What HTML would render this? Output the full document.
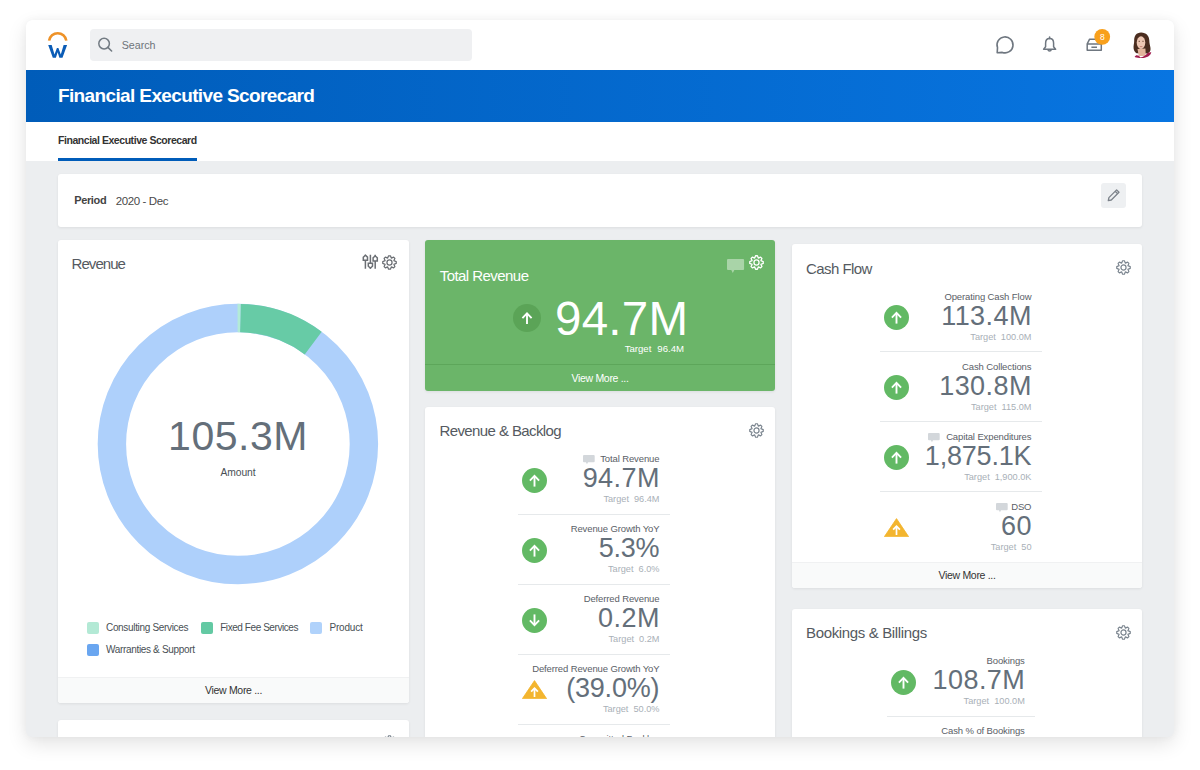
<!DOCTYPE html>
<html><head><meta charset="utf-8">
<style>
*{box-sizing:border-box;margin:0;padding:0}
html,body{width:1200px;height:770px;background:#fff;overflow:hidden;font-family:"Liberation Sans",sans-serif}
.win{position:absolute;left:26px;top:20px;width:1148px;height:717px;border-radius:6px;overflow:hidden;background:#eceef0;box-shadow:0 7px 20px rgba(0,0,0,0.11),0 0 8px rgba(0,0,0,0.04)}
.pg{position:absolute;left:-26px;top:-20px;width:1200px;height:770px}
.a{position:absolute;display:block}
.t{position:absolute;white-space:nowrap;line-height:1}
.card{position:absolute;background:#fff;border-radius:3px;box-shadow:0 1px 3px rgba(0,0,0,0.07)}
.foot{position:absolute;left:0;right:0;bottom:0;height:26px;background:#f9fafa;border-top:1px solid #f0f1f2;border-radius:0 0 3px 3px}
</style></head>
<body>
<div class="win"><div class="pg">

<div class="a" style="left:26px;top:20px;width:1148px;height:50px;background:#fff"></div>
<div class="a" style="left:26px;top:70px;width:1148px;height:52px;background:linear-gradient(90deg,#005cb9,#0875e1)"></div>
<div class="a" style="left:26px;top:122px;width:1148px;height:39px;background:#fff"></div>
<svg class="a" style="left:40px;top:28px" width="34" height="34" viewBox="40 28 34 34">
<path d="M49.1 40.6 A8.7 8.7 0 0 1 66.3 40.6" fill="none" stroke="#ee9228" stroke-width="2.6" stroke-linecap="butt"/>
<path d="M48.2 44.9 L51.7 44.9 L54.5 54.5 L56.9 47.9 L58.4 47.9 L60.8 54.5 L63.6 44.9 L67.1 44.9 L62.5 57.8 L59.4 57.8 L57.65 52.3 L55.9 57.8 L52.8 57.8 Z" fill="#0b5cb6"/>
</svg>
<div class="a" style="left:89.5px;top:29px;width:382.5px;height:32px;background:#eff0f2;border-radius:4px"></div>
<svg class="a" style="left:96px;top:35px" width="20" height="20" viewBox="96 35 20 20">
<circle cx="104.1" cy="43.6" r="5.3" fill="none" stroke="#737b83" stroke-width="1.5"/>
<path d="M107.9 47.4 L111.6 51" stroke="#737b83" stroke-width="1.6" stroke-linecap="round"/></svg>
<div class="t" style="left:121.70px;top:39.94px;font-size:10.7px;color:#6e747a;font-weight:normal;">Search</div>
<svg class="a" style="left:994px;top:34px" width="22" height="22" viewBox="994 34 22 22">
<path d="M1002.3 52.4 A8 8 0 1 0 997.5 47.6 L997.2 52.7 Z" fill="none" stroke="#6f7780" stroke-width="1.6" stroke-linejoin="round"/></svg>
<svg class="a" style="left:1040px;top:34px" width="20" height="22" viewBox="1040 34 20 22">
<path d="M1043.6 49.3 L1045.6 46.8 L1045.6 43.2 C1045.6 40.4 1047.4 38.6 1049.6 38.6 C1051.8 38.6 1053.6 40.4 1053.6 43.2 L1053.6 46.8 L1055.6 49.3 Z" fill="none" stroke="#6f7780" stroke-width="1.5" stroke-linejoin="round"/>
<path d="M1047.9 49.6 A1.75 1.75 0 0 0 1051.3 49.6" fill="none" stroke="#6f7780" stroke-width="1.5"/>
<path d="M1049.6 37 L1049.6 38.6" stroke="#6f7780" stroke-width="1.6" stroke-linecap="round"/></svg>
<svg class="a" style="left:1084px;top:26px" width="30" height="28" viewBox="1084 26 30 28">
<path d="M1087.2 43.9 L1089.6 39.2 L1098.6 39.2 L1101.3 43.9 L1101.3 50.2 L1087.2 50.2 Z M1087.2 43.9 L1101.3 43.9" fill="none" stroke="#6f7780" stroke-width="1.5" stroke-linejoin="round"/>
<path d="M1091.4 47.3 L1097 47.3" stroke="#6f7780" stroke-width="1.6"/>
<circle cx="1102.2" cy="36.8" r="7.9" fill="#f8a01c"/>
</svg>
<div class="t" style="left:802.30px;width:600px;text-align:center;top:32.80px;font-size:8.5px;color:#fff;font-weight:normal;">8</div>
<svg class="a" style="left:1130px;top:30px" width="24" height="30" viewBox="1130 30 24 30">
<path d="M1141.2 32.5 C1136.5 32.4 1134 36 1134.2 40.5 C1134.3 43.5 1133.2 45.5 1133.6 48.5 C1134 51 1135.2 52.5 1136.5 53.2 L1147.8 53.6 C1149.6 52.4 1150.9 50.8 1150.5 48 C1150.2 45.5 1149.3 43.5 1149.3 40.5 C1149.2 35.8 1146.2 32.6 1141.2 32.5 Z" fill="#4b2d1f"/>
<path d="M1137.5 49 C1138 52 1138.5 54 1138.8 56 L1145.5 56 C1145.8 53.5 1145.6 51 1145.4 48.5 Z" fill="#e2b59c"/>
<ellipse cx="1141" cy="42.6" rx="4.3" ry="6.3" fill="#edc7b3"/>
<path d="M1138.6 41.3 h1.4 M1142.3 41.3 h1.4" stroke="#6a4634" stroke-width="0.9"/>
<path d="M1139.8 46.6 h2.6" stroke="#c27a70" stroke-width="0.9"/>
<path d="M1134.6 57 C1135.6 55 1137 54.6 1138.8 55.8 L1140.5 57.6 C1144 56.8 1146.5 54.5 1147.5 53 C1149 52.5 1150.5 52.2 1151.3 52.4 C1150.5 55.5 1147 57.8 1142 58 C1139 58 1136.6 57.8 1134.6 57 Z" fill="#a11d4e"/>
</svg>
<div class="t" style="left:58.00px;top:86.42px;font-size:19px;color:#fff;font-weight:bold;letter-spacing:-0.63px;">Financial Executive Scorecard</div>
<div class="t" style="left:58.00px;top:135.01px;font-size:10.5px;color:#333;font-weight:bold;letter-spacing:-0.45px;">Financial Executive Scorecard</div>
<div class="a" style="left:58px;top:158px;width:138.5px;height:3px;background:#005cb9"></div>
<div class="card" style="left:58px;top:174.3px;width:1084px;height:52.4px"></div>
<div class="t" style="left:74.20px;top:195.39px;font-size:11px;color:#444;font-weight:bold;letter-spacing:-0.35px;">Period</div>
<div class="t" style="left:115.80px;top:195.87px;font-size:11.5px;color:#4a4a4a;font-weight:normal;letter-spacing:-0.4px;">2020 - Dec</div>
<div class="a" style="left:1101px;top:183.2px;width:25px;height:25px;background:#eef0f2;border-radius:3px"></div>
<svg class="a" style="left:1101px;top:183px" width="25" height="25" viewBox="1101 183 25 25">
<path d="M1108.3 200.6 L1108.9 197.6 L1116.6 189.9 L1119 192.3 L1111.3 200 Z M1115.2 191.3 L1117.6 193.7" fill="none" stroke="#7b8189" stroke-width="1.3" stroke-linejoin="round"/></svg>
<div class="card" style="left:58px;top:239.8px;width:351px;height:463.5px"><div class="foot"></div></div>
<div class="t" style="left:71.60px;top:256.30px;font-size:15px;color:#555a61;font-weight:normal;letter-spacing:-0.95px;">Revenue</div>
<div class="t" style="left:-66.50px;width:600px;text-align:center;top:684.91px;font-size:10.5px;color:#333;font-weight:normal;letter-spacing:-0.3px;">View More ...</div>
<svg class="a" style="left:360px;top:252px" width="20" height="20" viewBox="360 252 20 20">
<g stroke="#6b6f74" stroke-width="1.5" fill="#6b6f74">
<path d="M365.4 254.8 V268.8 M370.4 254.8 V268.8 M375.2 254.8 V268.8" fill="none"/>
<path d="M363.3 257.2 L365.4 255.3 L367.5 257.2 V260.2 H363.3 Z" fill="#fff"/>
<path d="M368.3 263.2 H372.5 V266.2 L370.4 268.1 L368.3 266.2 Z" fill="#fff"/>
<path d="M373.1 257.8 L375.2 255.9 L377.3 257.8 V261 H373.1 Z" fill="#fff"/>
</g></svg>
<svg class="a" style="left:381.80px;top:255.20px" width="15" height="15" viewBox="0 0 15 15"><path d="M6.59 0.76 L8.41 0.76 L9.32 3.10 L11.63 2.09 L12.91 3.37 L11.90 5.68 L14.24 6.59 L14.24 8.41 L11.90 9.32 L12.91 11.63 L11.63 12.91 L9.32 11.90 L8.41 14.24 L6.59 14.24 L5.68 11.90 L3.37 12.91 L2.09 11.63 L3.10 9.32 L0.76 8.41 L0.76 6.59 L3.10 5.68 L2.09 3.37 L3.37 2.09 L5.68 3.10 Z" fill="none" stroke="#6b6f74" stroke-width="1.25" stroke-linejoin="round"/><circle cx="7.5" cy="7.5" r="2.55" fill="none" stroke="#6b6f74" stroke-width="1.25"/></svg>
<svg class="a" style="left:58px;top:280px" width="351" height="330" viewBox="58 280 351 330"><circle cx="237.9" cy="444.05" r="126.0" fill="none" stroke="#aed0fb" stroke-width="28.39999999999999"/><path d="M240.59 303.88 A140.2 140.2 0 0 1 321.69 331.64 L304.71 354.41 A111.8 111.8 0 0 0 240.05 332.27 Z" fill="#67cba6"/><path d="M237.53 303.85 A140.2 140.2 0 0 1 240.59 303.88 L240.05 332.27 A111.8 111.8 0 0 0 237.61 332.25 Z" fill="#b3ebd7"/></svg>
<div class="t" style="left:-62.00px;width:600px;text-align:center;top:415.99px;font-size:41px;color:#646f7a;font-weight:normal;letter-spacing:0.5px;">105.3M</div>
<div class="t" style="left:-62.00px;width:600px;text-align:center;top:467.68px;font-size:10.3px;color:#494f55;font-weight:normal;letter-spacing:-0.05px;">Amount</div>
<div class="a" style="left:86.7px;top:622px;width:12.2px;height:11.7px;background:#b3e9d5;border-radius:2px"></div>
<div class="t" style="left:106.00px;top:623.33px;font-size:10px;color:#494f55;font-weight:normal;letter-spacing:-0.33px;">Consulting Services</div>
<div class="a" style="left:201.1px;top:622px;width:12.2px;height:11.7px;background:#63c9a3;border-radius:2px"></div>
<div class="t" style="left:220.20px;top:623.33px;font-size:10px;color:#494f55;font-weight:normal;letter-spacing:-0.43px;">Fixed Fee Services</div>
<div class="a" style="left:310.2px;top:622px;width:12.2px;height:11.7px;background:#b0d2fb;border-radius:2px"></div>
<div class="t" style="left:329.50px;top:623.33px;font-size:10px;color:#494f55;font-weight:normal;letter-spacing:-0.2px;">Product</div>
<div class="a" style="left:86.7px;top:644.3px;width:12.2px;height:11.7px;background:#6aa6f0;border-radius:2px"></div>
<div class="t" style="left:106.00px;top:645.33px;font-size:10px;color:#494f55;font-weight:normal;letter-spacing:-0.33px;">Warranties &amp; Support</div>
<div class="card" style="left:58px;top:719.6px;width:351px;height:100px"></div>
<svg class="a" style="left:381.80px;top:735.30px" width="15" height="15" viewBox="0 0 15 15"><path d="M6.59 0.76 L8.41 0.76 L9.32 3.10 L11.63 2.09 L12.91 3.37 L11.90 5.68 L14.24 6.59 L14.24 8.41 L11.90 9.32 L12.91 11.63 L11.63 12.91 L9.32 11.90 L8.41 14.24 L6.59 14.24 L5.68 11.90 L3.37 12.91 L2.09 11.63 L3.10 9.32 L0.76 8.41 L0.76 6.59 L3.10 5.68 L2.09 3.37 L3.37 2.09 L5.68 3.10 Z" fill="none" stroke="#7b858f" stroke-width="1.2" stroke-linejoin="round"/><circle cx="7.5" cy="7.5" r="2.55" fill="none" stroke="#7b858f" stroke-width="1.2"/></svg>
<div class="card" style="left:425px;top:239.8px;width:350px;height:151px;background:#6bb569"><div class="a" style="left:0;right:0;top:124.6px;height:1px;background:#5da65a"></div></div>
<div class="t" style="left:439.70px;top:267.60px;font-size:15px;color:#fff;font-weight:normal;letter-spacing:-0.55px;">Total Revenue</div>
<div class="t" style="left:300.00px;width:600px;text-align:center;top:372.61px;font-size:10.5px;color:#fff;font-weight:normal;letter-spacing:-0.3px;">View More ...</div>
<svg class="a" style="left:512.50px;top:304.40px" width="28" height="28" viewBox="0 0 28 28"><circle cx="14.0" cy="14.0" r="14.0" fill="#5ba457"/><g transform="translate(14.0,14.0) scale(1,1)" stroke="#fff" stroke-width="1.9" fill="none" stroke-linecap="butt" stroke-linejoin="miter"><path d="M0 -4.3 L0 6.1"/><path d="M-4.6 0.1 L0 -4.55 L4.6 0.1"/></g></svg>
<div class="t" style="left:555.00px;top:294.59px;font-size:47.5px;color:#fff;font-weight:normal;letter-spacing:0.25px;">94.7M</div>
<div class="t" style="left:624.7px;top:344.47px;font-size:9.6px;color:#fff">Target<span style="margin-left:6px">96.4M</span></div>
<svg class="a" style="left:726.90px;top:259.40px" width="18.1" height="15.1" viewBox="0 0 18.1 15.1"><path d="M1 0 H16.10 Q17.10 0 17.10 1 V10.00 Q17.10 11.00 16.10 11.00 H7.35 L5.81 14.08 L4.28 11.00 H1 Q0 11.00 0 10.00 V1 Q0 0 1 0 Z" fill="rgba(255,255,255,0.42)"/></svg>
<div style="display:none"></div>
<svg class="a" style="left:748.70px;top:255.10px" width="15" height="15" viewBox="0 0 15 15"><path d="M6.59 0.76 L8.41 0.76 L9.32 3.10 L11.63 2.09 L12.91 3.37 L11.90 5.68 L14.24 6.59 L14.24 8.41 L11.90 9.32 L12.91 11.63 L11.63 12.91 L9.32 11.90 L8.41 14.24 L6.59 14.24 L5.68 11.90 L3.37 12.91 L2.09 11.63 L3.10 9.32 L0.76 8.41 L0.76 6.59 L3.10 5.68 L2.09 3.37 L3.37 2.09 L5.68 3.10 Z" fill="none" stroke="#fff" stroke-width="1.3" stroke-linejoin="round"/><circle cx="7.5" cy="7.5" r="2.55" fill="none" stroke="#fff" stroke-width="1.3"/></svg>
<div class="card" style="left:425px;top:407.3px;width:350px;height:400px"></div>
<div class="t" style="left:439.50px;top:423.30px;font-size:15px;color:#555a61;font-weight:normal;letter-spacing:-0.6px;">Revenue &amp; Backlog</div>
<svg class="a" style="left:748.80px;top:422.70px" width="15" height="15" viewBox="0 0 15 15"><path d="M6.59 0.76 L8.41 0.76 L9.32 3.10 L11.63 2.09 L12.91 3.37 L11.90 5.68 L14.24 6.59 L14.24 8.41 L11.90 9.32 L12.91 11.63 L11.63 12.91 L9.32 11.90 L8.41 14.24 L6.59 14.24 L5.68 11.90 L3.37 12.91 L2.09 11.63 L3.10 9.32 L0.76 8.41 L0.76 6.59 L3.10 5.68 L2.09 3.37 L3.37 2.09 L5.68 3.10 Z" fill="none" stroke="#7b858f" stroke-width="1.2" stroke-linejoin="round"/><circle cx="7.5" cy="7.5" r="2.55" fill="none" stroke="#7b858f" stroke-width="1.2"/></svg>
<div class="t" style="right:540.50px;top:454.26px;font-size:9.5px;color:#5a6067;font-weight:normal;letter-spacing:-0.12px;margin-right:0.12px;">Total Revenue</div>
<svg class="a" style="left:583.30px;top:455.40px" width="12.7" height="10.3" viewBox="0 0 12.7 10.3"><path d="M1 0 H10.70 Q11.70 0 11.70 1 V6.30 Q11.70 7.30 10.70 7.30 H5.03 L3.98 9.34 L2.92 7.30 H1 Q0 7.30 0 6.30 V1 Q0 0 1 0 Z" fill="#d3d7db"/></svg>
<div class="t" style="right:540.50px;top:465.34px;font-size:27px;color:#646f7a;font-weight:normal;letter-spacing:0.45px;margin-right:-0.45px;">94.7M</div>
<div class="t" style="right:540.50px;top:495.21px;font-size:9.2px;color:#a9b0b7">Target<span style="margin-left:5px">96.4M</span></div>
<svg class="a" style="left:522.20px;top:467.60px" width="25" height="25" viewBox="0 0 25 25"><circle cx="12.5" cy="12.5" r="12.5" fill="#62b964"/><g transform="translate(12.5,12.5) scale(1,1)" stroke="#fff" stroke-width="1.9" fill="none" stroke-linecap="butt" stroke-linejoin="miter"><path d="M0 -4.3 L0 6.1"/><path d="M-4.6 0.1 L0 -4.55 L4.6 0.1"/></g></svg>
<div class="a" style="left:517.7px;top:513.90px;width:152.5999999999999px;height:1px;background:#e6e9eb"></div>
<div class="t" style="right:540.50px;top:524.26px;font-size:9.5px;color:#5a6067;font-weight:normal;letter-spacing:-0.12px;margin-right:0.12px;">Revenue Growth YoY</div>
<div class="t" style="right:540.50px;top:535.34px;font-size:27px;color:#646f7a;font-weight:normal;letter-spacing:-0.3px;margin-right:0.3px;">5.3%</div>
<div class="t" style="right:540.50px;top:565.21px;font-size:9.2px;color:#a9b0b7">Target<span style="margin-left:5px">6.0%</span></div>
<svg class="a" style="left:522.20px;top:537.60px" width="25" height="25" viewBox="0 0 25 25"><circle cx="12.5" cy="12.5" r="12.5" fill="#62b964"/><g transform="translate(12.5,12.5) scale(1,1)" stroke="#fff" stroke-width="1.9" fill="none" stroke-linecap="butt" stroke-linejoin="miter"><path d="M0 -4.3 L0 6.1"/><path d="M-4.6 0.1 L0 -4.55 L4.6 0.1"/></g></svg>
<div class="a" style="left:517.7px;top:583.90px;width:152.5999999999999px;height:1px;background:#e6e9eb"></div>
<div class="t" style="right:540.50px;top:594.26px;font-size:9.5px;color:#5a6067;font-weight:normal;letter-spacing:-0.12px;margin-right:0.12px;">Deferred Revenue</div>
<div class="t" style="right:540.50px;top:605.34px;font-size:27px;color:#646f7a;font-weight:normal;letter-spacing:0.45px;margin-right:-0.45px;">0.2M</div>
<div class="t" style="right:540.50px;top:635.21px;font-size:9.2px;color:#a9b0b7">Target<span style="margin-left:5px">0.2M</span></div>
<svg class="a" style="left:522.20px;top:607.60px" width="25" height="25" viewBox="0 0 25 25"><circle cx="12.5" cy="12.5" r="12.5" fill="#62b964"/><g transform="translate(12.5,12.5) scale(1,-1)" stroke="#fff" stroke-width="1.9" fill="none" stroke-linecap="butt" stroke-linejoin="miter"><path d="M0 -4.3 L0 6.1"/><path d="M-4.6 0.1 L0 -4.55 L4.6 0.1"/></g></svg>
<div class="a" style="left:517.7px;top:653.90px;width:152.5999999999999px;height:1px;background:#e6e9eb"></div>
<div class="t" style="right:540.50px;top:664.26px;font-size:9.5px;color:#5a6067;font-weight:normal;letter-spacing:-0.12px;margin-right:0.12px;">Deferred Revenue Growth YoY</div>
<div class="t" style="right:540.50px;top:675.34px;font-size:27px;color:#646f7a;font-weight:normal;letter-spacing:-0.2px;margin-right:0.2px;">(39.0%)</div>
<div class="t" style="right:540.50px;top:705.21px;font-size:9.2px;color:#a9b0b7">Target<span style="margin-left:5px">50.0%</span></div>
<svg class="a" style="left:522.20px;top:680.40px" width="25" height="19" viewBox="0 0 25 19"><path d="M12.5 0.6 L24.6 18.6 L0.4 18.6 Z" fill="#f3b52f" stroke="#f3b52f" stroke-width="0.8" stroke-linejoin="round"/><g stroke="#fff" stroke-width="1.7" fill="none"><path d="M12.5 8.3 L12.5 17"/><path d="M9.1 11.7 L12.5 8.3 L15.9 11.7"/></g></svg>
<div class="a" style="left:517.7px;top:723.90px;width:152.5999999999999px;height:1px;background:#e6e9eb"></div>
<div class="t" style="right:540.50px;top:734.26px;font-size:9.5px;color:#5a6067;font-weight:normal;letter-spacing:-0.12px;margin-right:0.12px;">Committed Backlog</div>
<div class="card" style="left:791.5px;top:244.2px;width:350.5px;height:344px"><div class="foot"></div></div>
<div class="t" style="left:806.00px;top:260.80px;font-size:15px;color:#555a61;font-weight:normal;letter-spacing:-0.55px;">Cash Flow</div>
<div class="t" style="left:667.00px;width:600px;text-align:center;top:569.81px;font-size:10.5px;color:#333;font-weight:normal;letter-spacing:-0.3px;">View More ...</div>
<svg class="a" style="left:1115.80px;top:260.10px" width="15" height="15" viewBox="0 0 15 15"><path d="M6.59 0.76 L8.41 0.76 L9.32 3.10 L11.63 2.09 L12.91 3.37 L11.90 5.68 L14.24 6.59 L14.24 8.41 L11.90 9.32 L12.91 11.63 L11.63 12.91 L9.32 11.90 L8.41 14.24 L6.59 14.24 L5.68 11.90 L3.37 12.91 L2.09 11.63 L3.10 9.32 L0.76 8.41 L0.76 6.59 L3.10 5.68 L2.09 3.37 L3.37 2.09 L5.68 3.10 Z" fill="none" stroke="#7b858f" stroke-width="1.2" stroke-linejoin="round"/><circle cx="7.5" cy="7.5" r="2.55" fill="none" stroke="#7b858f" stroke-width="1.2"/></svg>
<div class="t" style="right:168.50px;top:291.76px;font-size:9.5px;color:#5a6067;font-weight:normal;letter-spacing:-0.12px;margin-right:0.12px;">Operating Cash Flow</div>
<div class="t" style="right:168.50px;top:302.84px;font-size:27px;color:#646f7a;font-weight:normal;letter-spacing:0.45px;margin-right:-0.45px;">113.4M</div>
<div class="t" style="right:168.50px;top:332.71px;font-size:9.2px;color:#a9b0b7">Target<span style="margin-left:5px">100.0M</span></div>
<svg class="a" style="left:884.10px;top:305.10px" width="25" height="25" viewBox="0 0 25 25"><circle cx="12.5" cy="12.5" r="12.5" fill="#62b964"/><g transform="translate(12.5,12.5) scale(1,1)" stroke="#fff" stroke-width="1.9" fill="none" stroke-linecap="butt" stroke-linejoin="miter"><path d="M0 -4.3 L0 6.1"/><path d="M-4.6 0.1 L0 -4.55 L4.6 0.1"/></g></svg>
<div class="a" style="left:880px;top:351.40px;width:161.5px;height:1px;background:#e6e9eb"></div>
<div class="t" style="right:168.50px;top:361.76px;font-size:9.5px;color:#5a6067;font-weight:normal;letter-spacing:-0.12px;margin-right:0.12px;">Cash Collections</div>
<div class="t" style="right:168.50px;top:372.84px;font-size:27px;color:#646f7a;font-weight:normal;letter-spacing:0.45px;margin-right:-0.45px;">130.8M</div>
<div class="t" style="right:168.50px;top:402.71px;font-size:9.2px;color:#a9b0b7">Target<span style="margin-left:5px">115.0M</span></div>
<svg class="a" style="left:884.10px;top:375.10px" width="25" height="25" viewBox="0 0 25 25"><circle cx="12.5" cy="12.5" r="12.5" fill="#62b964"/><g transform="translate(12.5,12.5) scale(1,1)" stroke="#fff" stroke-width="1.9" fill="none" stroke-linecap="butt" stroke-linejoin="miter"><path d="M0 -4.3 L0 6.1"/><path d="M-4.6 0.1 L0 -4.55 L4.6 0.1"/></g></svg>
<div class="a" style="left:880px;top:421.40px;width:161.5px;height:1px;background:#e6e9eb"></div>
<div class="t" style="right:168.50px;top:431.76px;font-size:9.5px;color:#5a6067;font-weight:normal;letter-spacing:-0.12px;margin-right:0.12px;">Capital Expenditures</div>
<svg class="a" style="left:927.50px;top:432.90px" width="12.7" height="10.3" viewBox="0 0 12.7 10.3"><path d="M1 0 H10.70 Q11.70 0 11.70 1 V6.30 Q11.70 7.30 10.70 7.30 H5.03 L3.98 9.34 L2.92 7.30 H1 Q0 7.30 0 6.30 V1 Q0 0 1 0 Z" fill="#d3d7db"/></svg>
<div class="t" style="right:168.50px;top:442.84px;font-size:27px;color:#646f7a;font-weight:normal;letter-spacing:-0.2px;margin-right:0.2px;">1,875.1K</div>
<div class="t" style="right:168.50px;top:472.71px;font-size:9.2px;color:#a9b0b7">Target<span style="margin-left:5px">1,900.0K</span></div>
<svg class="a" style="left:884.10px;top:445.10px" width="25" height="25" viewBox="0 0 25 25"><circle cx="12.5" cy="12.5" r="12.5" fill="#62b964"/><g transform="translate(12.5,12.5) scale(1,1)" stroke="#fff" stroke-width="1.9" fill="none" stroke-linecap="butt" stroke-linejoin="miter"><path d="M0 -4.3 L0 6.1"/><path d="M-4.6 0.1 L0 -4.55 L4.6 0.1"/></g></svg>
<div class="a" style="left:880px;top:491.40px;width:161.5px;height:1px;background:#e6e9eb"></div>
<div class="t" style="right:168.50px;top:501.76px;font-size:9.5px;color:#5a6067;font-weight:normal;letter-spacing:-0.12px;margin-right:0.12px;">DSO</div>
<svg class="a" style="left:996.30px;top:502.90px" width="12.7" height="10.3" viewBox="0 0 12.7 10.3"><path d="M1 0 H10.70 Q11.70 0 11.70 1 V6.30 Q11.70 7.30 10.70 7.30 H5.03 L3.98 9.34 L2.92 7.30 H1 Q0 7.30 0 6.30 V1 Q0 0 1 0 Z" fill="#d3d7db"/></svg>
<div class="t" style="right:168.50px;top:512.84px;font-size:27px;color:#646f7a;font-weight:normal;letter-spacing:0.45px;margin-right:-0.45px;">60</div>
<div class="t" style="right:168.50px;top:542.71px;font-size:9.2px;color:#a9b0b7">Target<span style="margin-left:5px">50</span></div>
<svg class="a" style="left:884.10px;top:517.90px" width="25" height="19" viewBox="0 0 25 19"><path d="M12.5 0.6 L24.6 18.6 L0.4 18.6 Z" fill="#f3b52f" stroke="#f3b52f" stroke-width="0.8" stroke-linejoin="round"/><g stroke="#fff" stroke-width="1.7" fill="none"><path d="M12.5 8.3 L12.5 17"/><path d="M9.1 11.7 L12.5 8.3 L15.9 11.7"/></g></svg>
<div class="card" style="left:791.5px;top:609.1px;width:350.5px;height:200px"></div>
<div class="t" style="left:806.00px;top:625.10px;font-size:15px;color:#555a61;font-weight:normal;letter-spacing:-0.35px;">Bookings &amp; Billings</div>
<svg class="a" style="left:1115.80px;top:624.70px" width="15" height="15" viewBox="0 0 15 15"><path d="M6.59 0.76 L8.41 0.76 L9.32 3.10 L11.63 2.09 L12.91 3.37 L11.90 5.68 L14.24 6.59 L14.24 8.41 L11.90 9.32 L12.91 11.63 L11.63 12.91 L9.32 11.90 L8.41 14.24 L6.59 14.24 L5.68 11.90 L3.37 12.91 L2.09 11.63 L3.10 9.32 L0.76 8.41 L0.76 6.59 L3.10 5.68 L2.09 3.37 L3.37 2.09 L5.68 3.10 Z" fill="none" stroke="#7b858f" stroke-width="1.2" stroke-linejoin="round"/><circle cx="7.5" cy="7.5" r="2.55" fill="none" stroke="#7b858f" stroke-width="1.2"/></svg>
<div class="t" style="right:175.20px;top:656.16px;font-size:9.5px;color:#5a6067;font-weight:normal;letter-spacing:-0.12px;margin-right:0.12px;">Bookings</div>
<div class="t" style="right:175.20px;top:667.24px;font-size:27px;color:#646f7a;font-weight:normal;letter-spacing:0.45px;margin-right:-0.45px;">108.7M</div>
<div class="t" style="right:175.20px;top:697.11px;font-size:9.2px;color:#a9b0b7">Target<span style="margin-left:5px">100.0M</span></div>
<svg class="a" style="left:891.20px;top:669.50px" width="25" height="25" viewBox="0 0 25 25"><circle cx="12.5" cy="12.5" r="12.5" fill="#62b964"/><g transform="translate(12.5,12.5) scale(1,1)" stroke="#fff" stroke-width="1.9" fill="none" stroke-linecap="butt" stroke-linejoin="miter"><path d="M0 -4.3 L0 6.1"/><path d="M-4.6 0.1 L0 -4.55 L4.6 0.1"/></g></svg>
<div class="a" style="left:887.4px;top:715.80px;width:147.39999999999998px;height:1px;background:#e6e9eb"></div>
<div class="t" style="right:175.20px;top:726.16px;font-size:9.5px;color:#5a6067;font-weight:normal;letter-spacing:-0.12px;margin-right:0.12px;">Cash % of Bookings</div>
</div></div>
</body></html>
